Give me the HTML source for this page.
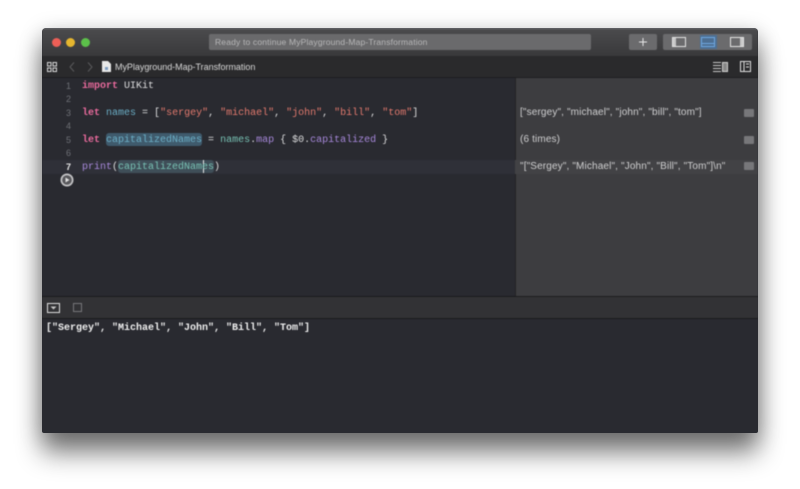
<!DOCTYPE html>
<html>
<head>
<meta charset="utf-8">
<style>
html,body{margin:0;padding:0;background:#fff;width:800px;height:489px;overflow:hidden}
*{box-sizing:border-box}
.abs{position:absolute}
#win{position:absolute;left:42px;top:28px;width:716px;height:405px;background:#292a30;border-radius:4px 4px 2px 2px;box-shadow:0 20px 26px rgba(0,0,0,.48),0 5px 22px rgba(0,0,0,.26);overflow:hidden}
#inner{position:absolute;left:0;top:0;width:716px;height:405px;filter:blur(.45px)}
#title{left:0;top:0;width:716px;height:28px;background:linear-gradient(#4b4b4d,#39393b);border-top:1px solid #77777a}
.dot{position:absolute;top:9px;width:9px;height:9px;border-radius:50%}
.btn{position:absolute;background:#6b6b6d;border-radius:2px}
#nav{left:0;top:28px;width:716px;height:22px;background:#2a2a2c;border-bottom:1px solid #1e1e20}
.sans{font-family:"Liberation Sans",sans-serif}
.code{position:absolute;left:40px;font:10px/13px "Liberation Mono",monospace;color:#dfdfe0;white-space:pre}
.ln{position:absolute;left:10px;width:19px;text-align:right;font:9px/13px "Liberation Sans",sans-serif;color:#6e7076}
.k{color:#e86a9c;font-weight:bold}.s{color:#e47a6e}.v{color:#6cb0c8}.t{color:#78c2b4}.p{color:#a889dc}
.hl{background:#3f5a6c;border-radius:3px}
.res{position:absolute;left:478px;font:10px/13px "Liberation Sans",sans-serif;letter-spacing:.14px;color:#d0d0d1;white-space:pre}
.q{position:absolute;left:702px;width:10px;height:8px;background:#77777a;border-radius:1px}
</style>
</head>
<body>
<div id="win"><div id="inner">
  <div class="abs" id="title">
    <div class="dot" style="left:10px;background:#ed5f57"></div>
    <div class="dot" style="left:24px;background:#e6b62f"></div>
    <div class="dot" style="left:39px;background:#5cc14a"></div>
    <div class="btn sans" style="left:167px;top:5px;width:382px;height:16px;background:#6a6a6c;font-size:8.5px;letter-spacing:.17px;line-height:16px;color:#b8b8b9;padding-left:6px">Ready to continue MyPlayground-Map-Transformation</div>
    <div class="btn" style="left:587px;top:5px;width:28px;height:16px"></div>
    <svg class="abs" style="left:596px;top:8px" width="10" height="10"><path d="M5 1V9M1 5H9" stroke="#e8e8e8" stroke-width="1"/></svg>
    <div class="btn" style="left:621px;top:5px;width:89px;height:16px"></div>
    <svg class="abs" style="left:621px;top:5px" width="89" height="16">
      <rect x="9.5" y="3.5" width="13" height="9" fill="none" stroke="#e4e4e4"/><rect x="10" y="4" width="3" height="8" fill="#c8c8c8"/>
      <rect x="37" y="1" width="17" height="14" fill="#4d6f93"/><rect x="38.5" y="3.5" width="13" height="9" fill="none" stroke="#6fa8e0"/><path d="M39 9.5H51" stroke="#6fa8e0"/>
      <rect x="67.5" y="3.5" width="13" height="9" fill="none" stroke="#e4e4e4"/><rect x="77" y="4" width="3" height="8" fill="#c8c8c8"/>
    </svg>
  </div>
  <div class="abs" id="nav">
    <svg class="abs" style="left:5px;top:6px" width="10" height="10"><path d="M.5.5H4V4H.5ZM6 .5H9.5V4H6ZM.5 6H4V9.5H.5ZM6 6H9.5V9.5H6Z" fill="none" stroke="#d8d8d8"/></svg>
    <svg class="abs" style="left:26px;top:5px" width="36" height="12"><path d="M6 1.5L2 6L6 10.500M20 1.500L24 6L20 10.500" fill="none" stroke="#5a5a5c" stroke-width="1"/></svg>
    <svg class="abs" style="left:60px;top:5px" width="9" height="11"><path d="M0 0H6L9 3V11H0Z" fill="#e8e8e8"/><rect x="3" y="6" width="3" height="3" fill="#7d9cc0"/></svg>
    <div class="abs sans" style="left:73px;top:5px;font-size:9px;letter-spacing:-.03px;line-height:12px;color:#d8d8d8;white-space:pre">MyPlayground-Map-Transformation</div>
    <svg class="abs" style="left:671px;top:5px" width="16" height="12"><path d="M0 1.500H8M0 4.500H8M0 7.500H8M0 10.500H8" stroke="#c8c8c8"/><rect x="9.500" y="1.500" width="5" height="9" fill="#888" stroke="#d0d0d0"/></svg>
    <svg class="abs" style="left:698px;top:5px" width="12" height="12"><rect x=".5" y=".5" width="10" height="10" fill="none" stroke="#e0e0e0"/><path d="M4 1V10M6 3H9M6 6H9" stroke="#e0e0e0"/></svg>
  </div>
  <div class="abs" style="left:473px;top:50px;width:243px;height:218px;background:#3d3d40;border-left:1px solid #242426"></div>
  <div class="abs" style="left:0;top:132px;width:473px;height:14px;background:#2f3038"></div>
  <div class="abs" style="left:473px;top:132px;width:243px;height:14px;background:#424245"></div>

  <div class="ln" style="top:52px">1</div>
  <div class="ln" style="top:65px">2</div>
  <div class="ln" style="top:79px">3</div>
  <div class="ln" style="top:92px">4</div>
  <div class="ln" style="top:106px">5</div>
  <div class="ln" style="top:119px">6</div>
  <div class="ln" style="top:133px;color:#e8e8e8;font-weight:bold">7</div>

  <div class="abs hl" style="left:64px;top:105px;width:96px;height:13px"></div>
  <div class="abs hl" style="left:76px;top:132px;width:96px;height:13px;background:#3f4e58"></div>
  <div class="abs" style="left:161px;top:132px;width:1px;height:13px;background:#e8e8e8"></div>

  <div class="code" style="top:52px"><span class="k">import</span> UIKit</div>
  <div class="code" style="top:79px"><span class="k">let</span> <span class="v">names</span> = [<span class="s">"sergey"</span>, <span class="s">"michael"</span>, <span class="s">"john"</span>, <span class="s">"bill"</span>, <span class="s">"tom"</span>]</div>
  <div class="code" style="top:106px"><span class="k">let</span> <span class="v">capitalizedNames</span> = <span class="t">names</span>.<span class="p">map</span> { $0.<span class="p">capitalized</span> }</div>
  <div class="code" style="top:133px"><span class="p">print</span>(<span class="t">capitalizedNames</span>)</div>

  <svg class="abs" style="left:18px;top:145px" width="14" height="14"><circle cx="7" cy="7" r="6.500" fill="#c4c4c6"/><circle cx="7" cy="7" r="4.800" fill="#58585c"/><path d="M5.500 4.500L9.500 7L5.500 9.500Z" fill="#e0e0e0"/></svg>

  <div class="res" style="top:78px">["sergey", "michael", "john", "bill", "tom"]</div>
  <div class="res" style="top:105px">(6 times)</div>
  <div class="res" style="top:132px">"["Sergey", "Michael", "John", "Bill", "Tom"]\n"</div>
  <div class="q" style="top:81px"></div>
  <div class="q" style="top:108px"></div>
  <div class="q" style="top:134px"></div>

  <div class="abs" style="left:0;top:268px;width:716px;height:23px;background:#323235;border-top:1px solid #1c1c1e;border-bottom:1px solid #1c1c1e"></div>
  <svg class="abs" style="left:5px;top:275px" width="13" height="10"><rect x=".5" y=".5" width="12" height="9" fill="none" stroke="#e0e0e0"/><path d="M3.500 3.500H9.500L6.500 6.500Z" fill="#c8c8c8"/></svg>
  <svg class="abs" style="left:31px;top:275px" width="9" height="9"><rect x=".5" y=".5" width="8" height="8" fill="none" stroke="#77777a"/></svg>
  <div class="abs" style="left:4px;top:294px;font:bold 10px/13px 'Liberation Mono',monospace;color:#f0f0f0;white-space:pre">["Sergey", "Michael", "John", "Bill", "Tom"]</div>
</div></div>
</body>
</html>
